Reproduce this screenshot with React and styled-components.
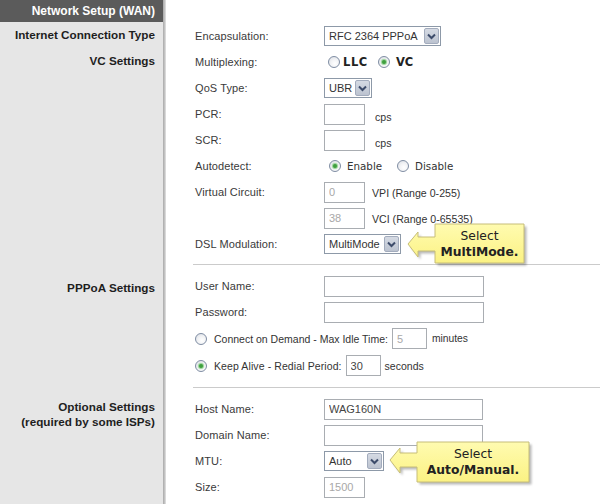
import React from "react";
import styled, { createGlobalStyle } from "styled-components";

const Global = createGlobalStyle`
  html, body { margin: 0; padding: 0; background: #fff; }
  body { font-family: "Liberation Sans", Arial, sans-serif; }
  #root { width: 600px; height: 504px; overflow: hidden; }
`;

const Page = styled.div`
  width: 600px;
  height: 504px;
  display: flex;
  flex-direction: column;
  background: #fff;
`;

const Section = styled.div`
  display: flex;
  flex: ${(p) => (p.$grow ? 1 : "none")};
`;

const Side = styled.div`
  width: 166px;
  flex-shrink: 0;
  box-sizing: border-box;
  padding-top: ${(p) => p.$top || 0}px;
  background: linear-gradient(
    to right,
    #e6e6e6 0,
    #e6e6e6 163px,
    #a9a9a9 163px,
    #c9c9c9 165px,
    #e9e9e9 166px
  );
`;

const HeaderBar = styled.div`
  width: 163px;
  height: 22px;
  box-sizing: border-box;
  background: #5b5b5b;
  color: #fff;
  font-weight: bold;
  font-size: 12px;
  line-height: 22px;
  text-align: right;
  padding-right: 8px;
`;

const SideLabel = styled.div`
  width: 163px;
  box-sizing: border-box;
  padding-right: 8px;
  text-align: right;
  font-weight: bold;
  font-size: 11.7px;
  color: #1e1e1e;
  line-height: ${(p) => p.$lh || 26}px;
`;

const Body = styled.div`
  flex: 1;
  position: relative;
  margin-left: 27px;
  padding: ${(p) => p.$top}px 0 ${(p) => p.$bottom}px;
  border-bottom: ${(p) => (p.$divider ? "1px solid #cbcbcb" : "none")};
`;

const Row = styled.div`
  display: flex;
  align-items: center;
  height: ${(p) => p.$h || 26}px;
  padding-left: 2px;
`;

const Label = styled.div`
  width: 129px;
  flex-shrink: 0;
  font-size: 11px;
  letter-spacing: 0.1px;
  color: #3a3a3a;
`;

const SelectBox = styled.div`
  width: ${(p) => p.$w}px;
  height: 20px;
  box-sizing: border-box;
  border: 1px solid #8d99a8;
  background: #fff;
  display: flex;
  align-items: center;
  justify-content: space-between;
  padding: 0 1px 0 4px;
  font-size: 11px;
  color: #333;
`;

const DropBtn = styled.span`
  width: 15px;
  height: 16px;
  box-sizing: border-box;
  border: 1px solid #a3acbd;
  border-radius: 2px;
  background: linear-gradient(#d5dae3, #bcc3d0);
  display: flex;
  align-items: center;
  justify-content: center;
`;

const Select = ({ w, value }) => (
  <SelectBox $w={w}>
    <span>{value}</span>
    <DropBtn>
      <svg width="9" height="7" viewBox="0 0 9 7">
        <path d="M1 1.5 L4.5 5 L8 1.5" fill="none" stroke="#3d4c6b" strokeWidth="2" />
      </svg>
    </DropBtn>
  </SelectBox>
);

const TextBox = styled.input.attrs({ type: "text", readOnly: true })`
  width: ${(p) => p.$w}px;
  height: 21px;
  box-sizing: border-box;
  margin: 0 0 0 ${(p) => p.$gap || 0}px;
  border: 1px solid #a9adb2;
  padding: 0 4px;
  font-family: "Liberation Sans", Arial, sans-serif;
  font-size: 11px;
  color: ${(p) => (p.$muted ? "#a8a8a8" : "#444")};
  background: #fff;
  outline: none;
`;

const Unit = styled.span`
  margin-left: ${(p) => p.$gap}px;
  padding-top: ${(p) => p.$drop || 0}px;
  font-size: ${(p) => p.$size || 10.6}px;
  color: #333;
  white-space: nowrap;
`;

const RadioDot = styled.span`
  width: 12px;
  height: 12px;
  flex-shrink: 0;
  box-sizing: border-box;
  border-radius: 50%;
  border: 1px solid #7f8da3;
  background: radial-gradient(circle at 60% 65%, #ffffff 0, #f2f3f5 45%, #d7dbe2 100%);
  margin-left: ${(p) => p.$gap || 0}px;
  display: flex;
  align-items: center;
  justify-content: center;
  &::after {
    content: "";
    width: 4px;
    height: 4px;
    border-radius: 50%;
    background: ${(p) => (p.$on ? "#3f9f3f" : "transparent")};
    box-shadow: ${(p) => (p.$on ? "0 0 1px 1px #8fd08f" : "none")};
  }
`;

const RadioText = styled.span`
  margin-left: ${(p) => p.$gap}px;
  font-family: ${(p) =>
    p.$plain ? '"Liberation Sans", Arial, sans-serif' : '"DejaVu Sans", Verdana, sans-serif'};
  font-size: ${(p) => p.$size}px;
  font-weight: ${(p) => (p.$bold ? "bold" : "normal")};
  letter-spacing: ${(p) => p.$ls || 0}px;
  color: ${(p) => (p.$bold ? "#222" : "#333")};
  white-space: nowrap;
`;

const Callout = styled.div`
  position: absolute;
  left: ${(p) => p.$x}px;
  top: ${(p) => p.$y}px;
  width: ${(p) => p.$w + p.$arrow + 4}px;
  height: ${(p) => p.$h + 4}px;
`;

const CalloutText = styled.div`
  position: absolute;
  left: ${(p) => p.$arrow}px;
  top: 0;
  width: ${(p) => p.$w}px;
  height: ${(p) => p.$h}px;
  display: flex;
  flex-direction: column;
  align-items: center;
  justify-content: center;
  font-family: "DejaVu Sans", Verdana, sans-serif;
  font-size: 12.3px;
  line-height: 16px;
  color: #222;
  b {
    font-weight: bold;
  }
`;

const CalloutShape = styled.svg`
  position: absolute;
  left: 0;
  top: 0;
  overflow: visible;
`;

const Tip = ({ x, y, w, h, tipY, lines }) => {
  const a = 27;
  const head = 10;
  const path = `M${a},0 H${a + w} V${h} H${a} V${tipY + 7} H${head} V${tipY + 13} L0,${tipY} L${head},${tipY - 12} V${tipY - 7} H${a} Z`;
  return (
    <Callout $x={x} $y={y} $w={w} $h={h} $arrow={a}>
      <CalloutShape width={a + w + 4} height={h + 4}>
        <defs>
          <filter id={`blur${x}`} x="-10%" y="-10%" width="130%" height="140%">
            <feGaussianBlur stdDeviation="1.2" />
          </filter>
          <linearGradient id={`fill${x}`} x1="0" y1="0" x2="0" y2="1">
            <stop offset="0" stopColor="#fffbb0" />
            <stop offset="1" stopColor="#fbf283" />
          </linearGradient>
        </defs>
        <path d={path} transform="translate(2.5,2.5)" fill="rgba(0,0,0,0.28)" filter={`url(#blur${x})`} />
        <path d={path} fill={`url(#fill${x})`} stroke="#c6bd78" strokeWidth="1" />
      </CalloutShape>
      <CalloutText $arrow={a} $w={w} $h={h}>
        <span>{lines[0]}</span>
        <b>{lines[1]}</b>
      </CalloutText>
    </Callout>
  );
};

export default function App() {
  return (
    <>
      <Global />
      <Page>
        <Section>
          <Side>
            <HeaderBar>Network Setup (WAN)</HeaderBar>
            <SideLabel>Internet Connection Type</SideLabel>
            <SideLabel>VC Settings</SideLabel>
          </Side>
          <Body $top={23} $bottom={7} $divider>
            <Row>
              <Label>Encapsulation:</Label>
              <Select w={117} value="RFC 2364 PPPoA" />
            </Row>
            <Row>
              <Label>Multiplexing:</Label>
              <RadioDot $gap={4} />
              <RadioText $gap={3} $size={11.5} $ls={0.6} $bold>LLC</RadioText>
              <RadioDot $gap={10} $on />
              <RadioText $gap={6} $size={11.5} $bold>VC</RadioText>
            </Row>
            <Row>
              <Label>QoS Type:</Label>
              <Select w={48} value="UBR" />
            </Row>
            <Row>
              <Label>PCR:</Label>
              <TextBox $w={41} value="" />
              <Unit $gap={10} $drop={5}>cps</Unit>
            </Row>
            <Row>
              <Label>SCR:</Label>
              <TextBox $w={41} value="" />
              <Unit $gap={10} $drop={5}>cps</Unit>
            </Row>
            <Row>
              <Label>Autodetect:</Label>
              <RadioDot $gap={5} $on />
              <RadioText $gap={6} $size={10.3}>Enable</RadioText>
              <RadioDot $gap={15} />
              <RadioText $gap={6} $size={10.3}>Disable</RadioText>
            </Row>
            <Row>
              <Label>Virtual Circuit:</Label>
              <TextBox $w={41} $muted value="0" />
              <Unit $gap={7} $drop={2}>VPI (Range 0-255)</Unit>
            </Row>
            <Row>
              <Label />
              <TextBox $w={41} $muted value="38" />
              <Unit $gap={7} $drop={2}>VCI (Range 0-65535)</Unit>
            </Row>
            <Row>
              <Label>DSL Modulation:</Label>
              <Select w={77} value="MultiMode" />
            </Row>
            <Tip x={215} y={224} w={89} h={39} tipY={20} lines={["Select", "MultiMode."]} />
          </Body>
        </Section>

        <Section>
          <Side $top={10}>
            <SideLabel>PPPoA Settings</SideLabel>
          </Side>
          <Body $top={8} $bottom={8} $divider>
            <Row>
              <Label>User Name:</Label>
              <TextBox $w={160} value="" />
            </Row>
            <Row>
              <Label>Password:</Label>
              <TextBox $w={160} value="" />
            </Row>
            <Row $h={27}>
              <RadioDot />
              <RadioText $gap={7} $size={10.5} $plain>
                Connect on Demand - Max Idle Time:
              </RadioText>
              <TextBox $w={35} $gap={4} $muted value="5" />
              <Unit $gap={5} $size={10.3}>minutes</Unit>
            </Row>
            <Row $h={27}>
              <RadioDot $on />
              <RadioText $gap={7} $size={10.5} $ls={0.1} $plain>
                Keep Alive - Redial Period:
              </RadioText>
              <TextBox $w={35} $gap={4} value="30" />
              <Unit $gap={4} $size={10.5}>seconds</Unit>
            </Row>
          </Body>
        </Section>

        <Section $grow>
          <Side $top={11}>
            <SideLabel $lh={15}>Optional Settings</SideLabel>
            <SideLabel $lh={15}>(required by some ISPs)</SideLabel>
          </Side>
          <Body $top={8} $bottom={0}>
            <Row>
              <Label>Host Name:</Label>
              <TextBox $w={159} value="WAG160N" />
            </Row>
            <Row>
              <Label>Domain Name:</Label>
              <TextBox $w={159} value="" />
            </Row>
            <Row>
              <Label>MTU:</Label>
              <Select w={60} value="Auto" />
            </Row>
            <Row>
              <Label>Size:</Label>
              <TextBox $w={41} $muted value="1500" />
            </Row>
            <Tip x={197} y={54} w={112} h={40} tipY={18} lines={["Select", "Auto/Manual."]} />
          </Body>
        </Section>
      </Page>
    </>
  );
}
